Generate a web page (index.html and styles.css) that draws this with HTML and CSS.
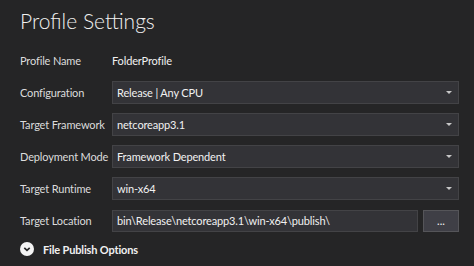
FILE: index.html
```html
<!DOCTYPE html>
<html lang="en">
<head>
    <meta charset="UTF-8">
    <title>Profile Settings</title>
    <link rel="stylesheet" href="styles.css">
</head>
<body>
    <div class="page">
        <h1>Profile Settings</h1>

        <div class="form">
            <label>Profile Name</label>
            <div class="plain">FolderProfile</div>

            <label>Configuration</label>
            <div class="select">
                <span>Release | Any CPU</span>
                <i class="arrow"></i>
            </div>

            <label>Target Framework</label>
            <div class="select">
                <span>netcoreapp3.1</span>
                <i class="arrow"></i>
            </div>

            <label>Deployment Mode</label>
            <div class="select">
                <span>Framework Dependent</span>
                <i class="arrow"></i>
            </div>

            <label>Target Runtime</label>
            <div class="select">
                <span>win-x64</span>
                <i class="arrow"></i>
            </div>

            <label>Target Location</label>
            <div class="path-row">
                <div class="textbox">bin\Release\netcoreapp3.1\win-x64\publish\</div>
                <button class="browse">...</button>
            </div>
        </div>

        <div class="expander">
            <span class="chevron">
                <svg width="14" height="14" viewBox="0 0 14 14">
                    <circle cx="7" cy="7" r="7" fill="#f4f4f4"/>
                    <path d="M4.3 5.8 L7 8.4 L9.7 5.8" fill="none" stroke="#252526" stroke-width="1.6"/>
                </svg>
            </span>
            <span>File Publish Options</span>
        </div>
    </div>
</body>
</html>
```

FILE: styles.css
```css
body {
    margin: 0;
    background-color: #252526;
    color: #dcdcdc;
    font-family: Lato, "Open Sans", sans-serif;
    font-size: 11px;
    letter-spacing: -0.15px;
    height: 266px;
    overflow: hidden;
}

.page {
    padding: 6px 15px 0 20px;
}

h1 {
    margin: 0 0 13px 0;
    font-size: 21px;
    font-weight: 300;
    letter-spacing: 0;
    color: #f1f1f1;
    line-height: 30px;
}

.form {
    display: grid;
    grid-template-columns: 92px 1fr;
    grid-auto-rows: 23px;
    row-gap: 9px;
    align-items: center;
}

label {
    white-space: nowrap;
}

.plain {
    color: #f1f1f1;
}

.select {
    height: 23px;
    box-sizing: border-box;
    background-color: #333337;
    border: 1px solid #434346;
    color: #f1f1f1;
    padding: 0 4px;
    display: flex;
    align-items: center;
    justify-content: space-between;
}

.arrow {
    width: 0;
    height: 0;
    border-left: 3px solid transparent;
    border-right: 3px solid transparent;
    border-top: 3px solid #c8c8c8;
    margin-right: 2px;
}

.path-row {
    display: flex;
    gap: 5px;
    height: 22px;
}

.textbox {
    flex: 1;
    box-sizing: border-box;
    background-color: #333337;
    border: 1px solid #434346;
    color: #f1f1f1;
    padding: 0 4px;
    display: flex;
    align-items: center;
}

.browse {
    width: 36px;
    box-sizing: border-box;
    background-color: #3f3f46;
    border: 1px solid #555559;
    color: #f1f1f1;
    font-family: Lato, sans-serif;
    font-size: 11px;
    padding: 0;
    line-height: 1;
}

.expander {
    display: flex;
    align-items: center;
    gap: 9px;
    margin-top: 10px;
    font-weight: 700;
    color: #f1f1f1;
}

.chevron {
    display: flex;
}
```
